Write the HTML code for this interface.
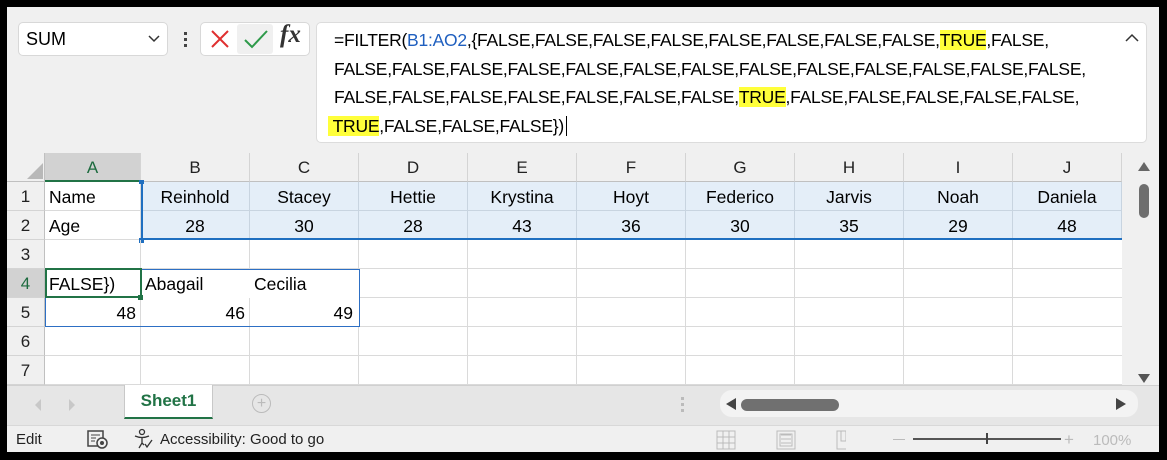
<!DOCTYPE html>
<html><head><style>
*{box-sizing:border-box;margin:0;padding:0}
body{width:1167px;height:460px;background:#000;position:relative;overflow:hidden;font-family:"Liberation Sans",sans-serif}
.app{position:absolute;left:7px;top:7px;width:1152px;height:445px;background:#f0f0f0}
.abs{position:absolute}
.fb{position:absolute;left:309px;top:15px;width:831px;height:121px;background:#fff;border:1px solid #dcdcdc;border-radius:5px}
.fl{position:absolute;left:17px;font-size:17.5px;color:#000;white-space:nowrap;letter-spacing:-0.25px}
.hl{background:#ffff3a}
.grid{position:absolute;left:0;top:146px;width:1115px;height:232px;background:#fff}
.ch{position:absolute;top:0;height:29px;background:#f0f0f0;border-right:1px solid #d4d4d4;border-bottom:1px solid #c0c0c0;font-size:17px;text-align:center;line-height:30px;color:#222}
.rh{position:absolute;left:0;width:38px;height:29px;background:#f0f0f0;border-bottom:1px solid #d4d4d4;border-right:1px solid #c0c0c0;font-size:17px;text-align:center;line-height:30px;color:#222}
.c{position:absolute;height:29px;border-right:1px solid #dadada;border-bottom:1px solid #dadada;font-size:17.5px;line-height:30px;padding:0 4px;white-space:nowrap;overflow:hidden}
.ctr{text-align:center}.r{text-align:right}
.bl{background:#e4eef8;border-right-color:#c8d4e0;border-bottom-color:#c8d4e0}
.t{position:absolute;height:29px;font-size:17.5px;line-height:30px;background:#fff}
</style></head><body><div class="app">
<div class="abs" style="left:11px;top:15px;width:150px;height:34px;background:#fff;border:1px solid #d8d8d8;border-radius:5px;font-size:18px;line-height:33px;padding-left:7px">SUM</div>
<svg class="abs" style="left:140px;top:26px" width="14" height="12"><path d="M2 3l5 5 5-5" stroke="#333" stroke-width="1.5" fill="none"/></svg>
<div class="abs" style="left:177px;top:25px;width:3px;height:3px;background:#444;box-shadow:0 6px 0 #444,0 12px 0 #444"></div>
<div class="abs" style="left:193px;top:15px;width:110px;height:34px;background:#fff;border:1px solid #d8d8d8;border-radius:5px"></div>
<div class="abs" style="left:230px;top:17px;width:36px;height:30px;background:#f0f0f0;border-radius:3px"></div>
<svg class="abs" style="left:203px;top:22px" width="20" height="20"><path d="M2 2l16 16M18 2L2 18" stroke="#e03030" stroke-width="2"/></svg>
<svg class="abs" style="left:236px;top:22px" width="26" height="20"><path d="M2 11l7 7L24 2" stroke="#2e9a4a" stroke-width="2" fill="none"/></svg>
<div class="abs" style="left:273px;top:14px;font-family:'Liberation Serif',serif;font-style:italic;font-weight:bold;font-size:25px;color:#333">fx</div>
<div class="fb">
<div class="fl" style="top:7px">=FILTER(<span style="color:#1f5fbf">B1:AO2</span>,{FALSE,FALSE,FALSE,FALSE,FALSE,FALSE,FALSE,FALSE,<span class="hl">TRUE</span>,FALSE,</div>
<div class="fl" style="top:36px">FALSE,FALSE,FALSE,FALSE,FALSE,FALSE,FALSE,FALSE,FALSE,FALSE,FALSE,FALSE,FALSE,</div>
<div class="fl" style="top:64px">FALSE,FALSE,FALSE,FALSE,FALSE,FALSE,FALSE,<span class="hl">TRUE</span>,FALSE,FALSE,FALSE,FALSE,FALSE,</div>
<div class="fl" style="top:93px;left:11px"><span class="hl">&nbsp;TRUE</span>,FALSE,FALSE,FALSE})<span style="border-left:1px solid #000;margin-left:2px"></span></div>
<svg class="abs" style="left:808px;top:10px" width="14" height="10"><path d="M1 8l6-6 6 6" stroke="#333" stroke-width="1.5" fill="none"/></svg>
</div>
<div class="grid">
<div class="abs" style="left:0;top:0;width:38px;height:29px;background:#f0f0f0;border-bottom:1px solid #c0c0c0;border-right:1px solid #c0c0c0"></div>
<svg class="abs" style="left:20px;top:10px" width="16" height="16"><path d="M16 0V16H0Z" fill="#b8b8b8"/></svg>
<div class="ch" style="left:38px;width:96px;background:#d2d2d2;border-bottom:2px solid #217346;color:#1d6b3f">A</div>
<div class="ch" style="left:134px;width:109px">B</div>
<div class="ch" style="left:243px;width:109px">C</div>
<div class="ch" style="left:352px;width:109px">D</div>
<div class="ch" style="left:461px;width:109px">E</div>
<div class="ch" style="left:570px;width:109px">F</div>
<div class="ch" style="left:679px;width:109px">G</div>
<div class="ch" style="left:788px;width:109px">H</div>
<div class="ch" style="left:897px;width:109px">I</div>
<div class="ch" style="left:1006px;width:109px">J</div>
<div class="rh" style="top:29px">1</div><div class="rh" style="top:58px">2</div><div class="rh" style="top:87px">3</div>
<div class="rh" style="top:116px;background:#d2d2d2;color:#1d6b3f">4</div><div class="rh" style="top:145px">5</div><div class="rh" style="top:174px">6</div><div class="rh" style="top:203px;height:29px">7</div>
<div class="c" style="left:38px;top:29px;width:96px">Name</div>
<div class="c" style="left:38px;top:58px;width:96px">Age</div>
<div class="c bl ctr" style="left:134px;top:29px;width:109px">Reinhold</div><div class="c bl ctr" style="left:134px;top:58px;width:109px">28</div>
<div class="c bl ctr" style="left:243px;top:29px;width:109px">Stacey</div><div class="c bl ctr" style="left:243px;top:58px;width:109px">30</div>
<div class="c bl ctr" style="left:352px;top:29px;width:109px">Hettie</div><div class="c bl ctr" style="left:352px;top:58px;width:109px">28</div>
<div class="c bl ctr" style="left:461px;top:29px;width:109px">Krystina</div><div class="c bl ctr" style="left:461px;top:58px;width:109px">43</div>
<div class="c bl ctr" style="left:570px;top:29px;width:109px">Hoyt</div><div class="c bl ctr" style="left:570px;top:58px;width:109px">36</div>
<div class="c bl ctr" style="left:679px;top:29px;width:109px">Federico</div><div class="c bl ctr" style="left:679px;top:58px;width:109px">30</div>
<div class="c bl ctr" style="left:788px;top:29px;width:109px">Jarvis</div><div class="c bl ctr" style="left:788px;top:58px;width:109px">35</div>
<div class="c bl ctr" style="left:897px;top:29px;width:109px">Noah</div><div class="c bl ctr" style="left:897px;top:58px;width:109px">29</div>
<div class="c bl ctr" style="left:1006px;top:29px;width:109px">Daniela</div><div class="c bl ctr" style="left:1006px;top:58px;width:109px">48</div>
<div class="abs" style="left:134px;top:29px;width:981px;height:58px;border-left:2px solid #1f6fc0;border-bottom:2px solid #1f6fc0"></div>
<div class="abs" style="left:132px;top:85px;width:5px;height:5px;background:#1f6fc0"></div>
<div class="abs" style="left:132px;top:27px;width:5px;height:4px;background:#1f6fc0"></div>
<div class="abs" style="left:38px;top:87px;width:1077px;height:145px;background:
repeating-linear-gradient(to bottom,transparent 0 28px,#dadada 28px 29px),
linear-gradient(to right,transparent 95px,#dadada 95px 96px,transparent 96px 204px,#dadada 204px 205px,transparent 205px 313px,#dadada 313px 314px,transparent 314px 422px,#dadada 422px 423px,transparent 423px 531px,#dadada 531px 532px,transparent 532px 640px,#dadada 640px 641px,transparent 641px 749px,#dadada 749px 750px,transparent 750px 858px,#dadada 858px 859px,transparent 859px 967px,#dadada 967px 968px,transparent 968px)"></div>
<div class="t" style="left:38px;top:116px;width:96px;padding-left:4px">FALSE})</div>
<div class="t" style="left:134px;top:116px;width:109px;padding-left:4px">Abagail</div>
<div class="t" style="left:243px;top:116px;width:109px;padding-left:4px">Cecilia</div>
<div class="t" style="left:38px;top:145px;width:96px;padding-right:4px;text-align:right;border-right:1px solid #dadada">48</div>
<div class="t" style="left:134px;top:145px;width:109px;padding-right:4px;text-align:right;border-right:1px solid #dadada">46</div>
<div class="t" style="left:243px;top:145px;width:109px;padding-right:6px;text-align:right">49</div>
<div class="abs" style="left:38px;top:116px;width:315px;height:58px;border:1px solid #2d6fc4"></div>
<div class="abs" style="left:38px;top:115px;width:97px;height:30px;border:2px solid #217346"></div>
<div class="abs" style="left:131px;top:142px;width:5px;height:5px;background:#217346"></div>
</div>
<div class="abs" style="left:1123px;top:146px;width:29px;height:232px;background:#f0f0f0"></div>
<svg class="abs" style="left:1131px;top:155px" width="12" height="9"><path d="M0 9L6 0l6 9z" fill="#666"/></svg>
<div class="abs" style="left:1132px;top:177px;width:10px;height:34px;background:#6e6e6e;border-radius:5px"></div>
<svg class="abs" style="left:1131px;top:367px" width="12" height="9"><path d="M0 0h12L6 9z" fill="#555"/></svg>
<div class="abs" style="left:0;top:378px;width:1152px;height:40px;background:#e6e6e6;border-top:1px solid #d0d0d0"></div>
<svg class="abs" style="left:28px;top:392px" width="50" height="12"><path d="M6 0L0 6l6 6z" fill="#c8c8c8"/><path d="M34 0l6 6-6 6z" fill="#c8c8c8"/></svg>
<div class="abs" style="left:117px;top:378px;width:89px;height:34px;background:#fff;border:1px solid #c8c8c8;border-top:none;border-bottom:2px solid #217346;color:#217346;font-weight:bold;font-size:17px;text-align:center;line-height:32px">Sheet1</div>
<div class="abs" style="left:245px;top:387px;width:19px;height:19px;border:1px solid #bbb;border-radius:50%;color:#bbb;font-size:16px;line-height:17px;text-align:center">+</div>
<div class="abs" style="left:674px;top:390px;width:3px;height:3px;background:#bbb;box-shadow:0 6px 0 #bbb,0 12px 0 #bbb"></div>
<div class="abs" style="left:713px;top:383px;width:418px;height:27px;background:#f3f3f3;border-radius:12px"></div>
<svg class="abs" style="left:719px;top:391px" width="10" height="12"><path d="M10 0v12L0 6z" fill="#444"/></svg>
<div class="abs" style="left:734px;top:392px;width:98px;height:12px;background:#707070;border-radius:6px"></div>
<svg class="abs" style="left:1109px;top:391px" width="10" height="12"><path d="M0 0v12l10-6z" fill="#444"/></svg>
<div class="abs" style="left:0;top:418px;width:1152px;height:27px;background:#f0f0f0;border-top:1px solid #d8d8d8"></div>
<div class="abs" style="left:9px;top:424px;font-size:15px;color:#222">Edit</div>
<svg class="abs" style="left:80px;top:423px" width="22" height="20"><rect x="1" y="1" width="15" height="15" fill="none" stroke="#444" stroke-width="1.5"/><path d="M4 5h9M4 8h5M4 11h4" stroke="#444"/><circle cx="15" cy="13" r="5" fill="#f0f0f0" stroke="#444" stroke-width="1.5"/><circle cx="15" cy="13" r="2" fill="#444"/></svg>
<svg class="abs" style="left:126px;top:421px" width="22" height="22"><circle cx="9" cy="4" r="2.5" fill="none" stroke="#333" stroke-width="1.3"/><path d="M2 8q7 3 14 0M9 9v6l-3 5M9 15l2 2M12 16l2 3 5-7" stroke="#333" stroke-width="1.3" fill="none"/></svg>
<div class="abs" style="left:153px;top:424px;font-size:15px;color:#222">Accessibility: Good to go</div>
<svg class="abs" style="left:709px;top:422px" width="130" height="22"><path d="M1 2h18v18H1zM7 2v18M13 2v18M1 8h18M1 14h18" stroke="#bbb" fill="none"/><path d="M61 2h18v18H61zM65 6h10M65 10h10M65 14h10M64 5h12v12H64z" stroke="#bbb" fill="none"/><path d="M121 2h18v18h-18zM125 2v10h10V2M130 2v10" stroke="#bbb" fill="none"/></svg>
<div class="abs" style="left:886px;top:432px;width:12px;height:1px;background:#bbb"></div>
<div class="abs" style="left:906px;top:431px;width:148px;height:2px;background:#555"></div>
<div class="abs" style="left:979px;top:426px;width:2px;height:11px;background:#444"></div>
<div class="abs" style="left:1057px;top:423px;font-size:17px;color:#bbb">+</div>
<div class="abs" style="left:1086px;top:425px;font-size:15px;color:#bbb">100%</div>
</div></body></html>
